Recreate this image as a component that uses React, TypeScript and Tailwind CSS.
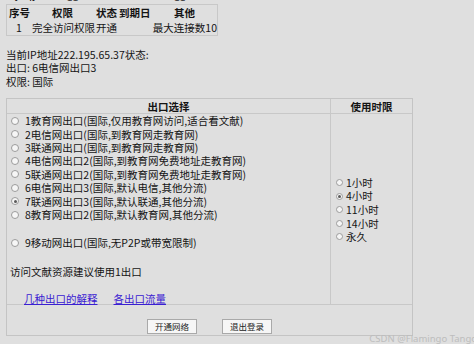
import React from "react";

function Radio({ checked = false, small = false }: { checked?: boolean; small?: boolean }) {
  return (
    <span
      className={
        (small ? "w-[7px] h-[7px]" : "w-[8px] h-[8px]") +
        " shrink-0 inline-flex items-center justify-center rounded-full border border-[#9c9c9c] bg-[#f6f6f6]"
      }
    >
      {checked && <span className="w-[3px] h-[3px] rounded-full bg-[#5a5a5a]" />}
    </span>
  );
}

const exits = [
  "1教育网出口(国际,仅用教育网访问,适合看文献)",
  "2电信网出口(国际,到教育网走教育网)",
  "3联通网出口(国际,到教育网走教育网)",
  "4电信网出口2(国际,到教育网免费地址走教育网)",
  "5联通网出口2(国际,到教育网免费地址走教育网)",
  "6电信网出口3(国际,默认电信,其他分流)",
  "7联通网出口3(国际,默认联通,其他分流)",
  "8教育网出口2(国际,默认教育网,其他分流)",
];

const times = ["1小时", "4小时", "11小时", "14小时", "永久"];

export default function App() {
  return (
    <div className="relative w-[474px] h-[344px] overflow-hidden bg-[#dfdfdf] text-[#141414] text-[10.5px] leading-[13.4px] font-['Noto_Sans_CJK_SC','Noto_Sans',sans-serif]">
      <div className="-mt-[13px] h-[16px] pl-[4px] leading-[14px] whitespace-nowrap">
        Ary: qy_2021gg 到期日: 2099-09-09 gg
      </div>

      <div className="mt-[1px] ml-[6px] w-[212px] border border-[#c8c8c8] whitespace-nowrap">
        <div className="flex h-[15px] items-center font-bold">
          <div className="w-[24px] pl-[2px]">序号</div>
          <div className="w-[63px] text-center">权限</div>
          <div className="w-[24px] pl-[2px]">状态</div>
          <div className="w-[34px] pl-[1px]">到期日</div>
          <div className="flex-1 text-center">其他</div>
        </div>
        <div className="flex h-[15px] items-center">
          <div className="w-[24px] text-center">1</div>
          <div className="w-[63px] pl-[1px] overflow-visible">完全访问权限</div>
          <div className="w-[24px] pl-[2px]">开通</div>
          <div className="w-[34px]"></div>
          <div className="flex-1 pl-[1px]">最大连接数10</div>
        </div>
      </div>

      <div className="mt-[12px] pl-[6px] whitespace-nowrap">
        <div>当前IP地址222.195.65.37状态:</div>
        <div>出口: 6电信网出口3</div>
        <div>权限: 国际</div>
      </div>

      <div className="mt-[10px] ml-[6px] w-[407px] border border-[#c4c4c4]">
        <div className="flex h-[15px] items-center border-b border-[#c8c8c8] font-bold">
          <div className="w-[324px] h-full flex items-center justify-center border-r border-[#c8c8c8]">出口选择</div>
          <div className="flex-1 text-center">使用时限</div>
        </div>
        <div className="flex h-[191px] border-b border-[#c8c8c8]">
          <div className="w-[324px] border-r border-[#c8c8c8] pl-[4px]">
            {exits.map((t, i) => (
              <div key={i} className="flex items-center h-[13.4px] whitespace-nowrap">
                <Radio checked={i === 6} />
                <span className="ml-[6px]">{t}</span>
              </div>
            ))}
            <div className="h-[14.6px]" />
            <div className="flex items-center h-[13.4px] whitespace-nowrap">
              <Radio />
              <span className="ml-[6px]">9移动网出口(国际,无P2P或带宽限制)</span>
            </div>
            <div className="h-[15.6px]" />
            <div className="h-[13.4px] -ml-[1px]">访问文献资源建议使用1出口</div>
            <div className="h-[13.6px]" />
            <div className="flex h-[13.4px] pl-[13px] gap-[16px] text-[#3a20d2]">
              <a className="underline underline-offset-[1px]">几种出口的解释</a>
              <a className="underline underline-offset-[1px]">各出口流量</a>
            </div>
          </div>
          <div className="flex-1 flex flex-col justify-center pl-[5px] pt-[1px]">
            {times.map((t, i) => (
              <div key={i} className="flex items-center h-[13.6px] whitespace-nowrap">
                <Radio small checked={i === 1} />
                <span className="ml-[3px]">{t}</span>
              </div>
            ))}
          </div>
        </div>
        <div className="flex h-[30px] justify-center gap-[25px] pt-[14px]">
          <button className="w-[50px] h-[15px] border border-[#a9a9a9] bg-[#f6f6f6] text-[8.5px] leading-[13px] text-[#222]">开通网络</button>
          <button className="w-[50px] h-[15px] border border-[#a9a9a9] bg-[#f6f6f6] text-[8.5px] leading-[13px] text-[#222]">退出登录</button>
        </div>
      </div>

      <div className="absolute right-[-3px] bottom-[-1px] text-[9.5px] leading-[12px] text-[#bdbdbd] whitespace-nowrap font-['Noto_Sans',sans-serif]">
        CSDN @Flamingo Tango
      </div>
    </div>
  );
}
